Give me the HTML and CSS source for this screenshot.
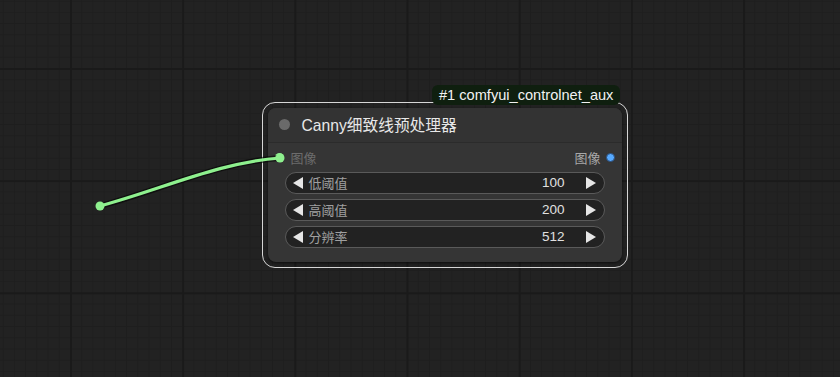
FILE: index.html
```html
<!DOCTYPE html>
<html>
<head>
<meta charset="utf-8">
<link rel="stylesheet" href="styles.css">
</head>
<body>
<div class="canvas">
  <svg class="links" width="840" height="377" viewBox="0 0 840 377">
    <path d="M100 206 C 160 190, 220 162, 280 158" fill="none" stroke="#000" stroke-opacity="0.55" stroke-width="6" stroke-linecap="round"/>
    <path d="M100 206 C 160 190, 220 162, 280 158" fill="none" stroke="#8ef08e" stroke-width="3.2" stroke-linecap="round"/>
    <circle cx="100" cy="206" r="4.5" fill="#8ef08e"/>
    <circle cx="280" cy="158" r="4.5" fill="#8ef08e"/>
  </svg>

  <div class="badge">#1 comfyui_controlnet_aux</div>

  <div class="selected">
    <div class="node">
      <div class="title">
        <span class="title-dot"></span>
        <span class="title-text">Canny细致线预处理器</span>
      </div>
      <div class="body">
        <div class="io">
          <div class="slot slot-in"><span class="dot dot-green"></span><span class="slot-label dim">图像</span></div>
          <div class="slot slot-out"><span class="slot-label">图像</span><span class="dot dot-blue"></span></div>
        </div>
        <div class="widget"><span class="arrow arrow-left"></span><span class="w-label">低阈值</span><span class="w-value">100</span><span class="arrow arrow-right"></span></div>
        <div class="widget"><span class="arrow arrow-left"></span><span class="w-label">高阈值</span><span class="w-value">200</span><span class="arrow arrow-right"></span></div>
        <div class="widget"><span class="arrow arrow-left"></span><span class="w-label">分辨率</span><span class="w-value">512</span><span class="arrow arrow-right"></span></div>
      </div>
    </div>
  </div>
</div>
</body>
</html>
```

FILE: styles.css
```css
html, body {
  margin: 0;
  padding: 0;
  background: #222222;
}

.canvas {
  position: relative;
  width: 840px;
  height: 377px;
  overflow: hidden;
  font-family: "Liberation Sans", Arial, "Noto Sans CJK SC", sans-serif;
  background-color: #222222;
  background-image:
    linear-gradient(to right, #1a1a1a 0, #1a1a1a 2px, transparent 2px),
    linear-gradient(to bottom, #1a1a1a 0, #1a1a1a 2px, transparent 2px),
    linear-gradient(to right, #1e1e1e 0, #1e1e1e 1px, transparent 1px),
    linear-gradient(to bottom, #1e1e1e 0, #1e1e1e 1px, transparent 1px);
  background-size: 112.2px 112.2px, 112.2px 112.2px, 11.22px 11.22px, 11.22px 11.22px;
  background-position: 70px 68px, 70px 68px, 70px 68px, 70px 68px;
}

.links {
  position: absolute;
  left: 0;
  top: 0;
  z-index: 2;
}

.badge {
  position: absolute;
  left: 432px;
  top: 85px;
  height: 20px;
  padding: 0 7px;
  box-sizing: border-box;
  width: 188px;
  background: #0f1f0f;
  border-radius: 6px;
  color: #f2f2f2;
  font-size: 14.6px;
  line-height: 20px;
  white-space: nowrap;
  z-index: 1;
}

.selected {
  position: absolute;
  left: 262px;
  top: 102px;
  width: 366px;
  height: 166px;
  box-sizing: border-box;
  border: 1.5px solid #d6d6d6;
  border-radius: 13px;
  padding: 4.5px;
}

.node {
  width: 354px;
  height: 154px;
  background: #353535;
  border-radius: 8px;
  box-shadow: 0 1px 3px rgba(0,0,0,0.6);
  display: flex;
  flex-direction: column;
  overflow: hidden;
}

.title {
  height: 35px;
  flex: none;
  background: #333333;
  border-bottom: 1px solid #2b2b2b;
  box-sizing: border-box;
  display: flex;
  align-items: center;
  padding-left: 11px;
}

.title-dot {
  width: 11px;
  height: 11px;
  border-radius: 50%;
  background: #6a6a6a;
  margin-right: 12px;
}

.title-text {
  color: #e8e8e8;
  font-size: 15.7px;
  font-family: "Liberation Sans", Arial, "Noto Sans CJK SC", sans-serif;
}

.body {
  display: flex;
  flex-direction: column;
  padding: 8px 17px 0 17px;
  gap: 5px;
}

.io {
  display: flex;
  justify-content: space-between;
  align-items: center;
  height: 14px;
  margin: 0 -10.5px 2px -9.5px;
}

.slot {
  display: flex;
  align-items: center;
  font-size: 13px;
}

.slot-label {
  color: #a8a8a8;
  font-family: "Noto Sans CJK SC", sans-serif;
  font-size: 13px;
}

.slot-label.dim {
  color: #6c6c6c;
}

.dot {
  width: 9px;
  height: 9px;
  border-radius: 50%;
  display: inline-block;
  flex: none;
}

.dot-green {
  background: #8ef08e;
  margin-right: 6.5px;
}

.dot-blue {
  background: #57aaff;
  border: 1px solid #2b4d7a;
  box-sizing: border-box;
  margin-left: 5.5px;
}

.widget {
  height: 22px;
  box-sizing: border-box;
  border: 1px solid #5a5a5a;
  border-radius: 11px;
  background: #222222;
  display: flex;
  align-items: center;
  padding: 0 8px 0 7px;
  color: #dcdcdc;
  font-size: 13.5px;
}

.arrow {
  width: 0;
  height: 0;
  border-top: 6px solid transparent;
  border-bottom: 6px solid transparent;
  flex: none;
}

.arrow-left {
  border-right: 10px solid #e6e6e6;
}

.arrow-right {
  border-left: 10px solid #e6e6e6;
}

.w-label {
  color: #a0a0a0;
  font-family: "Noto Sans CJK SC", sans-serif;
  font-size: 13px;
  margin-left: 6px;
  flex: 1;
}

.w-value {
  color: #e0e0e0;
  margin-right: 21px;
}
```
